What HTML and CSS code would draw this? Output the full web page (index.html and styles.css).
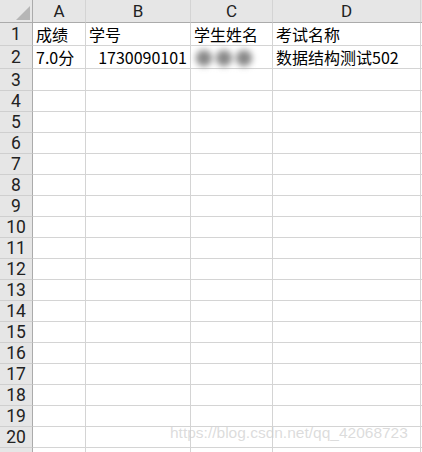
FILE: index.html
```html
<!DOCTYPE html>
<html lang="zh">
<head>
<meta charset="utf-8">
<link rel="stylesheet" href="styles.css">
</head>
<body>
<div class="sheet">
  <div class="grid">
    <div class="corner"><span class="tri"></span></div>
    <div class="ch">A</div><div class="ch">B</div><div class="ch">C</div><div class="ch">D</div><div class="ch edge"></div>

    <div class="rh">1</div><div class="c">成绩</div><div class="c">学号</div><div class="c">学生姓名</div><div class="c">考试名称</div><div class="c edge"></div>
    <div class="rh">2</div><div class="c">7.0分</div><div class="c num">1730090101</div><div class="c"><span class="blur">●●●</span></div><div class="c">数据结构测试502</div><div class="c edge"></div>
    <div class="rh">3</div><div class="c"></div><div class="c"></div><div class="c"></div><div class="c"></div><div class="c edge"></div>
    <div class="rh">4</div><div class="c"></div><div class="c"></div><div class="c"></div><div class="c"></div><div class="c edge"></div>
    <div class="rh">5</div><div class="c"></div><div class="c"></div><div class="c"></div><div class="c"></div><div class="c edge"></div>
    <div class="rh">6</div><div class="c"></div><div class="c"></div><div class="c"></div><div class="c"></div><div class="c edge"></div>
    <div class="rh">7</div><div class="c"></div><div class="c"></div><div class="c"></div><div class="c"></div><div class="c edge"></div>
    <div class="rh">8</div><div class="c"></div><div class="c"></div><div class="c"></div><div class="c"></div><div class="c edge"></div>
    <div class="rh">9</div><div class="c"></div><div class="c"></div><div class="c"></div><div class="c"></div><div class="c edge"></div>
    <div class="rh">10</div><div class="c"></div><div class="c"></div><div class="c"></div><div class="c"></div><div class="c edge"></div>
    <div class="rh">11</div><div class="c"></div><div class="c"></div><div class="c"></div><div class="c"></div><div class="c edge"></div>
    <div class="rh">12</div><div class="c"></div><div class="c"></div><div class="c"></div><div class="c"></div><div class="c edge"></div>
    <div class="rh">13</div><div class="c"></div><div class="c"></div><div class="c"></div><div class="c"></div><div class="c edge"></div>
    <div class="rh">14</div><div class="c"></div><div class="c"></div><div class="c"></div><div class="c"></div><div class="c edge"></div>
    <div class="rh">15</div><div class="c"></div><div class="c"></div><div class="c"></div><div class="c"></div><div class="c edge"></div>
    <div class="rh">16</div><div class="c"></div><div class="c"></div><div class="c"></div><div class="c"></div><div class="c edge"></div>
    <div class="rh">17</div><div class="c"></div><div class="c"></div><div class="c"></div><div class="c"></div><div class="c edge"></div>
    <div class="rh">18</div><div class="c"></div><div class="c"></div><div class="c"></div><div class="c"></div><div class="c edge"></div>
    <div class="rh">19</div><div class="c"></div><div class="c"></div><div class="c"></div><div class="c"></div><div class="c edge"></div>
    <div class="rh">20</div><div class="c"></div><div class="c"></div><div class="c"></div><div class="c"></div><div class="c edge"></div>
    <div class="rh"></div><div class="c"></div><div class="c"></div><div class="c"></div><div class="c"></div><div class="c edge"></div>
  </div>
  <div class="watermark">https://blog.csdn.net/qq_42068723</div>
</div>
</body>
</html>
```
FILE: styles.css
```css
html, body {
  margin: 0;
  padding: 0;
  background: #ffffff;
  overflow: hidden;
}
.sheet {
  position: relative;
  width: 422px;
  height: 452px;
  overflow: hidden;
  font-family: "Noto Sans CJK SC", "Noto Sans", sans-serif;
  font-size: 16px;
  color: #000;
}
.grid {
  display: grid;
  grid-template-columns: 33px 53px 105px 82px 148px 10px;
  grid-template-rows: 23px 23px 23px 22px repeat(18, 21px);
}
.grid > div {
  box-sizing: border-box;
  border-right: 1px solid #d4d4d4;
  border-bottom: 1px solid #d4d4d4;
  white-space: nowrap;
  line-height: 18px;
}
.corner {
  background: #e6e6e6;
  position: relative;
  border-right-color: #ababab !important;
  border-bottom-color: #ababab !important;
}
.tri {
  position: absolute;
  right: 2px;
  bottom: 2px;
  width: 0;
  height: 0;
  border-left: 14px solid transparent;
  border-bottom: 14px solid #b6b6b6;
}
.ch {
  background: #e6e6e6;
  border-bottom-color: #ababab !important;
  display: flex;
  align-items: center;
  justify-content: center;
  font-family: Roboto, "Noto Sans", sans-serif;
  font-size: 17px;
  color: #222;
}
.rh {
  background: #e6e6e6;
  border-right-color: #ababab !important;
  border-bottom-color: #cfcfcf !important;
  display: flex;
  align-items: center;
  justify-content: center;
  font-family: Roboto, "Noto Sans", sans-serif;
  font-size: 17.5px;
  color: #222;
}
.c {
  display: flex;
  align-items: flex-end;
  padding: 0 0 2px 3px;
}
.c.num {
  justify-content: flex-end;
  padding-right: 3px;
}
.edge {
  border-right: none !important;
}
.blur {
  color: #8a8a8a;
  font-size: 18px;
  letter-spacing: 2px;
  filter: blur(3px);
  padding-left: 1px;
}
.watermark {
  position: absolute;
  left: 170px;
  top: 424px;
  font-family: "Liberation Sans", Arial, sans-serif;
  font-size: 15.5px;
  line-height: 18px;
  color: rgba(205, 205, 205, 0.7);
  white-space: nowrap;
}
```
